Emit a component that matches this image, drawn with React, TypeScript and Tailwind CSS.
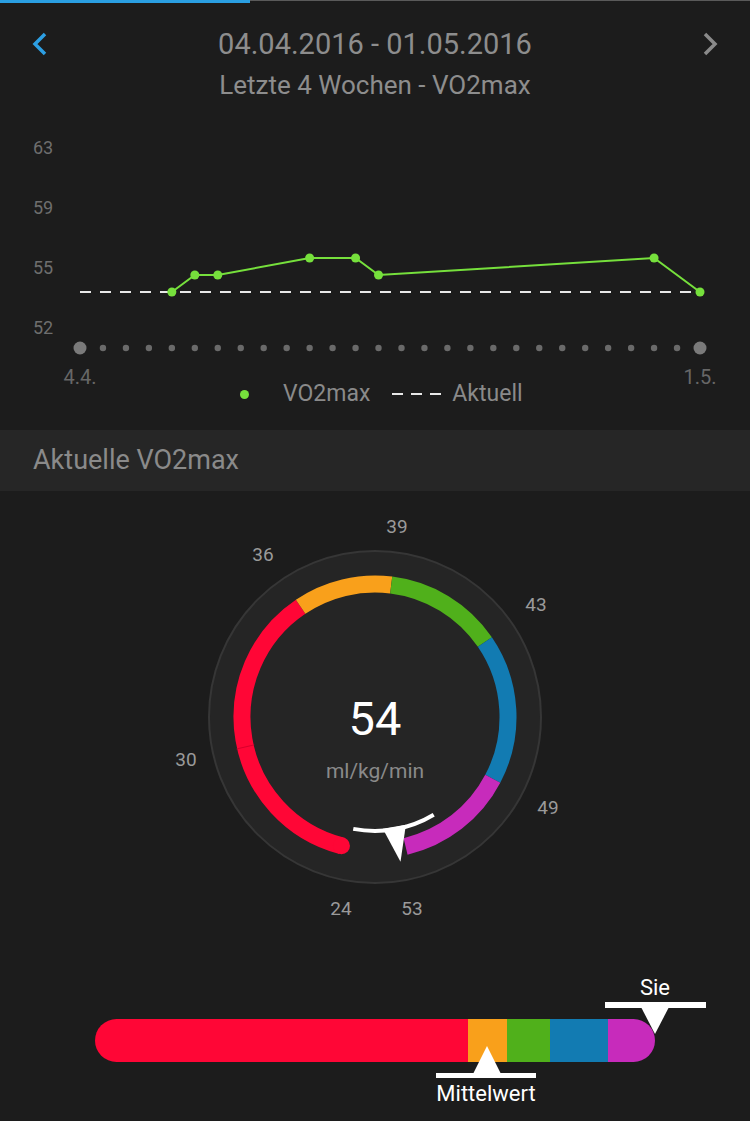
const GREEN = "#76e03c";
const CX = 375;
const CY = 717;

function polar(r: number, deg: number): [number, number] {
  const a = (deg * Math.PI) / 180;
  return [CX + r * Math.sin(a), CY - r * Math.cos(a)];
}

function arc(r: number, a0: number, a1: number) {
  const [x0, y0] = polar(r, a0);
  const [x1, y1] = polar(r, a1);
  const large = a1 - a0 > 180 ? 1 : 0;
  return `M${x0} ${y0} A${r} ${r} 0 ${large} 1 ${x1} ${y1}`;
}

const dayX = (i: number) => 80 + (i * 620) / 27;

const points = [
  { i: 4, y: 292 },
  { i: 5, y: 275 },
  { i: 6, y: 275 },
  { i: 10, y: 258 },
  { i: 12, y: 258 },
  { i: 13, y: 275 },
  { i: 25, y: 258 },
  { i: 27, y: 292 },
];

const yLabels = [
  { v: "63", y: 148 },
  { v: "59", y: 208 },
  { v: "55", y: 268 },
  { v: "52", y: 328 },
];

const segments = [
  { from: 194.6, to: 326, color: "#ff0636" },
  { from: 326, to: 367, color: "#f9a01b" },
  { from: 367, to: 415.7, color: "#50b01b" },
  { from: 415.7, to: 477.7, color: "#127bb2" },
  { from: 477.7, to: 526.7, color: "#c72bbb" },
];

const gaugeLabels = [
  { v: "39", x: 397, y: 526 },
  { v: "36", x: 263, y: 554 },
  { v: "43", x: 536, y: 604 },
  { v: "30", x: 186, y: 759 },
  { v: "49", x: 548, y: 807 },
  { v: "24", x: 341, y: 908 },
  { v: "53", x: 412, y: 908 },
];

function Chevron({ dir, color }: { dir: "left" | "right"; color: string }) {
  return (
    <svg width="16" height="24" viewBox="0 0 16 24">
      <polyline
        points={dir === "left" ? "13,2 3,12 13,22" : "3,2 13,12 3,22"}
        fill="none"
        stroke={color}
        strokeWidth="3.5"
      />
    </svg>
  );
}

function Chart() {
  const line = points.map((p) => `${dayX(p.i)},${p.y}`).join(" ");
  return (
    <svg width="750" height="266" viewBox="0 100 750 266" className="block">
      {yLabels.map((l) => (
        <text key={l.v} x="33" y={l.y + 6} fill="#6e6e6e" fontSize="18">
          {l.v}
        </text>
      ))}
      <line x1="80" y1="292" x2="700" y2="292" stroke="#e8e8e8" strokeWidth="2" strokeDasharray="11 9" />
      <polyline points={line} fill="none" stroke={GREEN} strokeWidth="2" />
      {points.map((p) => (
        <circle key={p.i} cx={dayX(p.i)} cy={p.y} r="4.5" fill={GREEN} />
      ))}
      {Array.from({ length: 28 }).map((_, i) => (
        <circle
          key={i}
          cx={dayX(i)}
          cy="348"
          r={i === 0 || i === 27 ? 6.5 : 3.2}
          fill={i === 0 || i === 27 ? "#7a7a7a" : "#6a6a6a"}
        />
      ))}
    </svg>
  );
}

function Gauge() {
  const [sx, sy] = polar(133, 194.6);
  const t1 = polar(112, 164);
  const t2 = polar(112, 176);
  const tip = polar(147, 170);
  const seamA = polar(124, 257);
  const seamB = polar(142, 257);
  return (
    <svg width="750" height="440" viewBox="0 491 750 440" className="block">
      <circle cx={CX} cy={CY} r="166" fill="#252525" stroke="#363636" strokeWidth="2" />
      {segments.map((s) => (
        <path key={s.color} d={arc(133, s.from, s.to)} fill="none" stroke={s.color} strokeWidth="17" />
      ))}
      <circle cx={sx} cy={sy} r="8.5" fill="#ff0636" />
      <line x1={seamA[0]} y1={seamA[1]} x2={seamB[0]} y2={seamB[1]} stroke="#d8002c" strokeWidth="1" />
      <path d={arc(114, 149, 191)} fill="none" stroke="#ffffff" strokeWidth="4" />
      <polygon points={`${t1[0]},${t1[1]} ${t2[0]},${t2[1]} ${tip[0]},${tip[1]}`} fill="#ffffff" />
      {gaugeLabels.map((l) => (
        <text key={l.v} x={l.x} y={l.y + 7} textAnchor="middle" fill="#9a9a9a" fontSize="19">
          {l.v}
        </text>
      ))}
      <text x={CX} y="735" textAnchor="middle" fill="#ffffff" fontSize="47">
        54
      </text>
      <text x={CX} y="778" textAnchor="middle" fill="#8a8a8a" fontSize="21">
        ml/kg/min
      </text>
    </svg>
  );
}

function RangeBar() {
  return (
    <div className="relative h-[190px] pt-[88px] pl-[95px]">
      <div className="flex h-[43px] w-[560px] overflow-hidden rounded-full">
        <div className="w-[373px] bg-[#ff0636]" />
        <div className="w-[39px] bg-[#f9a01b]" />
        <div className="w-[43px] bg-[#50b01b]" />
        <div className="w-[58px] bg-[#127bb2]" />
        <div className="w-[47px] bg-[#c72bbb]" />
      </div>
      <svg width="750" height="190" viewBox="0 931 750 190" className="absolute left-0 top-0">
        <rect x="605" y="1002" width="101" height="6" fill="#ffffff" />
        <polygon points="641,1007 669,1007 655,1034" fill="#ffffff" />
        <rect x="436" y="1073" width="100" height="5" fill="#ffffff" />
        <polygon points="473,1074 501,1074 487,1046" fill="#ffffff" />
      </svg>
      <span className="absolute left-[655px] top-[44px] -translate-x-1/2 text-[22px] leading-[26px] text-white">
        Sie
      </span>
      <span className="absolute left-[486px] top-[150px] -translate-x-1/2 text-[22px] leading-[26px] text-white">
        Mittelwert
      </span>
    </div>
  );
}

export default function App() {
  return (
    <div className="w-[750px] min-h-[1121px] bg-[#1c1c1c] font-[Roboto,sans-serif]">
      <div className="flex h-[3px] items-start">
        <div className="h-[3px] w-[250px] bg-[#2a9fe2]" />
        <div className="h-px flex-1 bg-[#5a5a5a]" />
      </div>

      <div className="flex items-center justify-between px-[32px] pt-[25px]">
        <Chevron dir="left" color="#2d9fe3" />
        <div className="text-[29px] leading-[32px] text-[#8d8d8d]">04.04.2016 - 01.05.2016</div>
        <Chevron dir="right" color="#8a8a8a" />
      </div>
      <div className="mt-[10px] text-center text-[26px] leading-[30px] text-[#8d8d8d]">
        Letzte 4 Wochen - VO2max
      </div>

      <Chart />

      <div className="flex h-[42px] items-start">
        <div className="ml-[50px] w-[60px] text-center text-[20px] leading-[22px] text-[#676767]">4.4.</div>
        <div className="mt-[17px] flex h-[22px] flex-1 items-center pl-[130px] text-[23px] text-[#8a8a8a]">
          <div className="h-[9px] w-[9px] rounded-full bg-[#76e03c]" />
          <span className="ml-[34px]">VO2max</span>
          <div className="ml-[22px] flex gap-[8px]">
            <div className="h-[2px] w-[11px] bg-[#e8e8e8]" />
            <div className="h-[2px] w-[11px] bg-[#e8e8e8]" />
            <div className="h-[2px] w-[11px] bg-[#e8e8e8]" />
          </div>
          <span className="ml-[11px]">Aktuell</span>
        </div>
        <div className="mr-[20px] w-[60px] text-center text-[20px] leading-[22px] text-[#676767]">1.5.</div>
      </div>

      <div className="mt-[22px] flex h-[61px] items-center bg-[#262626] px-[33px] text-[27px] text-[#8a8a8a]">
        Aktuelle VO2max
      </div>

      <Gauge />
      <RangeBar />
    </div>
  );
}
